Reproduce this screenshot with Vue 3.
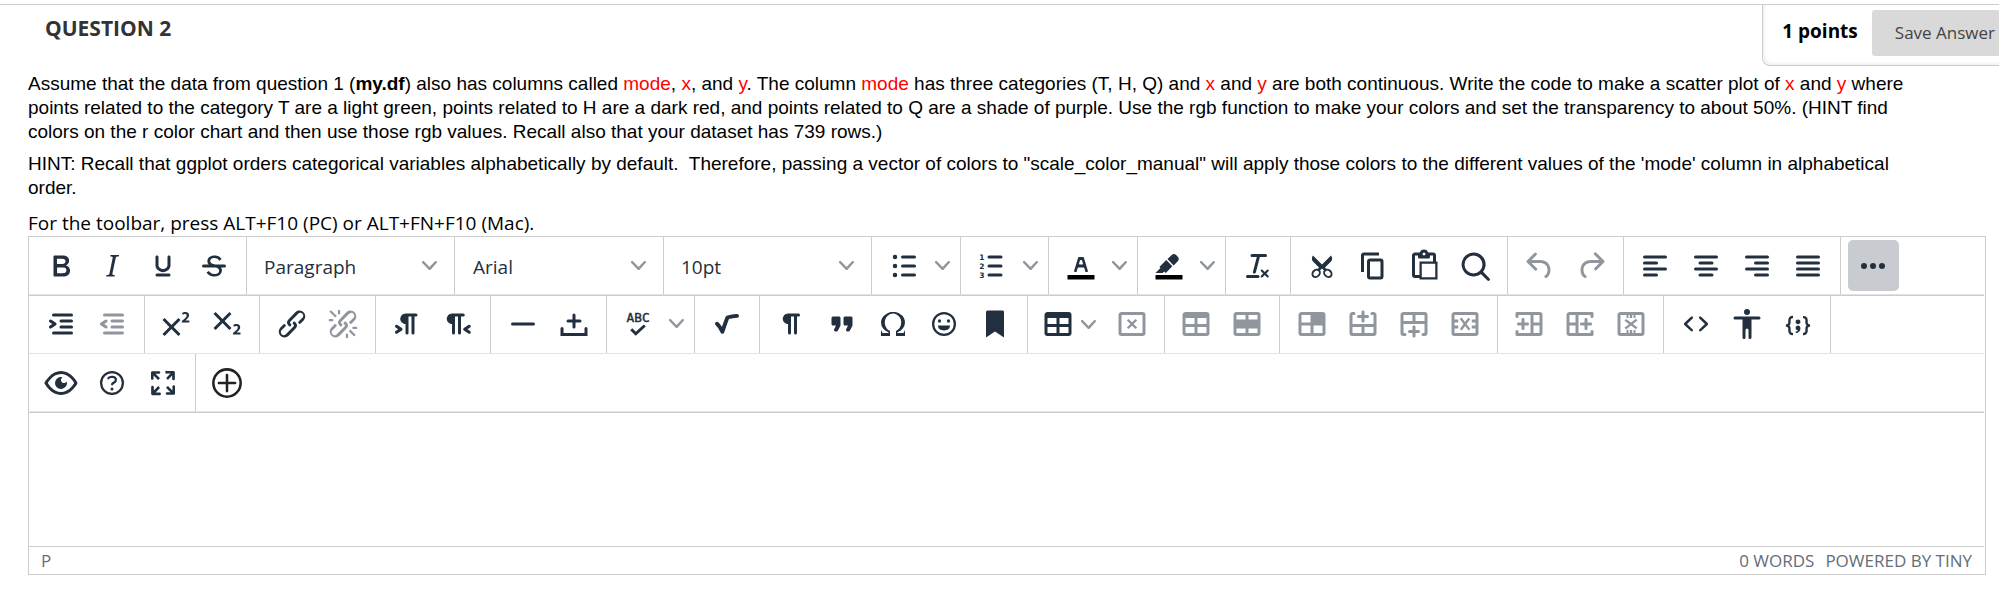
<script setup>
import { ref } from 'vue'

const svg = {
  bold: '<path d="M7.8 19c-.3 0-.5 0-.6-.2l-.2-.5V5.7c0-.2 0-.4.2-.5l.6-.2h5c1.5 0 2.7.3 3.5 1 .7.6 1.1 1.4 1.1 2.5a3 3 0 01-.6 1.9c-.4.6-1 1-1.6 1.2.4.1.9.3 1.3.6s.8.7 1 1.2c.4.4.5 1 .5 1.6 0 1.3-.4 2.3-1.3 3-.8.7-2.1 1-3.8 1H7.8zm5-8.3c.6 0 1.2-.1 1.6-.5.4-.3.6-.7.6-1.3 0-1.1-.8-1.7-2.3-1.7H9.3v3.5h3.4zm.5 6c.7 0 1.3-.1 1.7-.4.4-.4.6-.9.6-1.5s-.2-1-.7-1.4c-.4-.3-1-.4-2-.4H9.4v3.8h4z"/>',
  italic: '<path d="M16.7 4.7l-.1.9h-.3c-.6 0-1 0-1.4.3-.3.3-.4.6-.5 1.1l-2.1 9.8v.6c0 .5.4.8 1.4.8h.2l-.2.8H8l.2-.8h.2c1.1 0 1.8-.5 2-1.5l2-9.8.1-.5c0-.6-.4-.8-1.4-.8h-.3l.2-.9h5.8z"/>',
  underline: '<path d="M16 5c.6 0 1 .4 1 1v5.5a4 4 0 01-.4 1.8l-1 1.4a5.3 5.3 0 01-5.5 1 5 5 0 01-1.6-1c-.5-.4-.8-.9-1.1-1.4a4 4 0 01-.4-1.8V6c0-.6.4-1 1-1s1 .4 1 1v5.5c0 .3 0 .6.2 1l.6.7a3.3 3.3 0 002.2.8 3.4 3.4 0 002.2-.8c.3-.2.4-.5.6-.8l.2-.9V6c0-.6.4-1 1-1zM8 17h8c.6 0 1 .4 1 1s-.4 1-1 1H8a1 1 0 010-2z"/>',
  strike: '<path d="M15.6 8.5c-.5-.7-1-1.1-1.3-1.3-.6-.4-1.3-.6-2-.6-2.7 0-2.8 1.7-2.8 2.1 0 1.6 1.8 2 3.2 2.3 4.4.9 4.6 2.8 4.6 3.9 0 1.4-.7 4.1-5 4.1A6.2 6.2 0 017 16.4l1.5-1.1c.4.6 1.6 2 3.7 2 1.6 0 2.5-.4 3-1.2.4-.8.3-2-.8-2.6-.7-.4-1.6-.7-2.9-1-1-.2-3.9-.8-3.9-3.6C7.6 6 10.3 5 12.4 5c2.9 0 4.2 1.6 4.7 2.4l-1.5 1.1zM5 11h14a1 1 0 010 2H5a1 1 0 010-2z"/>',
  bullets: '<path d="M11 5h8a1 1 0 010 2h-8a1 1 0 010-2zm0 6h8a1 1 0 010 2h-8a1 1 0 010-2zm0 6h8a1 1 0 010 2h-8a1 1 0 010-2z"/><circle cx="6" cy="6" r="1.5"/><circle cx="6" cy="12" r="1.5"/><circle cx="6" cy="18" r="1.5"/>',
  numbers: '<path d="M10 5h8a1 1 0 010 2h-8a1 1 0 010-2zm0 6h8a1 1 0 010 2h-8a1 1 0 010-2zm0 6h8a1 1 0 010 2h-8a1 1 0 010-2z"/><g font-family="DejaVu Sans, sans-serif" font-size="5" font-weight="bold"><text x="3.5" y="8">1</text><text x="3.5" y="14">2</text><text x="3.5" y="20">3</text></g>',
  forecolor: '<path d="M3 18h18v3H3z" fill="#000"/><path d="M8.7 16h-.8a.5.5 0 01-.5-.6l2.7-9c.1-.3.3-.4.5-.4h2.8c.2 0 .4.1.5.4l2.7 9a.5.5 0 01-.5.6h-.8a.5.5 0 01-.4-.4l-.7-2.2c0-.3-.3-.4-.5-.4h-3.4c-.2 0-.4.1-.5.4l-.7 2.2c0 .3-.2.4-.4.4zm2.6-7.6l-.6 2a.5.5 0 00.5.6h1.6a.5.5 0 00.5-.6l-.6-2c0-.3-.3-.4-.5-.4h-.4c-.2 0-.4.1-.5.4z"/>',
  backcolor: '<path d="M3 18h18v3H3z" fill="#000"/><path d="M7.7 16.7H3l3.3-3.3-.7-.8L10.2 8l4 4.1-4 4.2c-.2.2-.6.2-.8 0l-.6-.7-1.1 1.1zm5-7.5L11 7.4l3-2.9a2 2 0 012.6 0L18 6c.7.7.7 2 0 2.7l-2.9 2.9-1.8-1.8-.5-.6"/>',
  clear: '<path d="M13.2 6a1 1 0 010 .2l-2.6 10a1 1 0 01-1 .8h-.2a.8.8 0 01-.8-1l2.6-10H8a1 1 0 110-2h9a1 1 0 010 2h-3.8zM5 18h7a1 1 0 010 2H5a1 1 0 010-2zm13 1.5L16.5 18 15 19.5a.7.7 0 01-1-1l1.5-1.5-1.5-1.5a.7.7 0 011-1l1.5 1.5 1.5-1.5a.7.7 0 011 1L17.5 17l1.5 1.5a.7.7 0 01-1 1z"/>',
  cut: '<path d="M6 5l6 6 6-6c1 1.300 1 3 0 4l-4 4 1 1.200-1.200 1.200L12 13.600l-1.800 1.800L9 14.200 10 13 6 9c-1-1-1-2.700 0-4z"/><g fill="none" stroke="#222f3e" stroke-width="1.300"><ellipse cx="8.100" cy="16.900" rx="2.700" ry="2.200" transform="rotate(-45 8.100 16.900)"/><ellipse cx="15.900" cy="16.900" rx="2.700" ry="2.200" transform="rotate(45 15.900 16.900)"/></g>',
  copy: '<path d="M16 3H6a2 2 0 00-2 2v11h2V5h10V3zm1 4a2 2 0 012 2v10a2 2 0 01-2 2h-7a2 2 0 01-2-2V9c0-1.200.9-2 2-2h7zm0 12V9h-7v10h7z"/>',
  paste: '<path d="M18 9V5h-2v1c0 .6-.4 1-1 1H9a1 1 0 01-1-1V5H6v13h3V9h9zM9 20H6a2 2 0 01-2-2V5c0-1.1.9-2 2-2h3.2A3 3 0 0112 1a3 3 0 012.8 2H18a2 2 0 012 2v4h1v12H9v-1zm1.500-9.500v9h9v-9h-9zM12 3a1 1 0 00-1 1c0 .5.4 1 1 1s1-.5 1-1-.4-1-1-1z"/>',
  search: '<path d="M16 17.3a8 8 0 111.4-1.4l4.3 4.4a1 1 0 01-1.4 1.4l-4.4-4.3zm-5-.3a6 6 0 100-12 6 6 0 000 12z"/>',
  undo: '<path d="M6.4 8H12c3.7 0 6.2 2 6.8 5.1.6 2.7-.4 5.6-2.3 6.8a1 1 0 01-1-1.8c1.1-.6 1.8-2.7 1.4-4.6-.5-2.1-2.1-3.5-4.9-3.5H6.4l3.3 3.3a1 1 0 11-1.4 1.4l-5-5a1 1 0 010-1.4l5-5a1 1 0 011.4 1.4L6.4 8z"/>',
  redo: '<path d="M17.6 10H12c-2.8 0-4.4 1.4-4.9 3.5-.4 2 .3 4 1.4 4.6a1 1 0 11-1 1.8c-2-1.2-2.9-4.1-2.3-6.8.6-3 3-5.1 6.8-5.1h5.600l-3.300-3.300a1 1 0 111.4-1.4l5 5a1 1 0 010 1.4l-5 5a1 1 0 01-1.4-1.4l3.3-3.3z"/>',
  left: '<path d="M5 5h14a1 1 0 010 2H5a1 1 0 010-2zm0 4h8a1 1 0 010 2H5a1 1 0 010-2zm0 8h8a1 1 0 010 2H5a1 1 0 010-2zm0-4h14a1 1 0 010 2H5a1 1 0 010-2z"/>',
  center: '<path d="M5 5h14a1 1 0 010 2H5a1 1 0 010-2zm3 4h8a1 1 0 010 2H8a1 1 0 010-2zm0 8h8a1 1 0 010 2H8a1 1 0 010-2zm-3-4h14a1 1 0 010 2H5a1 1 0 010-2z"/>',
  right: '<path d="M5 5h14a1 1 0 010 2H5a1 1 0 010-2zm6 4h8a1 1 0 010 2h-8a1 1 0 010-2zm0 8h8a1 1 0 010 2h-8a1 1 0 010-2zm-6-4h14a1 1 0 010 2H5a1 1 0 010-2z"/>',
  justify: '<path d="M5 5h14a1 1 0 010 2H5a1 1 0 010-2zm0 4h14a1 1 0 010 2H5a1 1 0 010-2zm0 4h14a1 1 0 010 2H5a1 1 0 010-2zm0 4h14a1 1 0 010 2H5a1 1 0 010-2z"/>',
  more: '<circle cx="6" cy="12" r="2"/><circle cx="12" cy="12" r="2"/><circle cx="18" cy="12" r="2"/>',
  indent: '<path d="M7 5h12a1 1 0 010 2H7a1 1 0 010-2zm5 4h7a1 1 0 010 2h-7a1 1 0 010-2zm0 4h7a1 1 0 010 2h-7a1 1 0 010-2zm-5 4h12a1 1 0 010 2H7a1 1 0 010-2zm-2.600-3.800L6.200 12l-1.800-1.200a1 1 0 011.200-1.600l3 2a1 1 0 010 1.600l-3 2a1 1 0 11-1.200-1.600z"/>',
  outdent: '<path d="M7 5h12a1 1 0 010 2H7a1 1 0 010-2zm5 4h7a1 1 0 010 2h-7a1 1 0 010-2zm0 4h7a1 1 0 010 2h-7a1 1 0 010-2zm-5 4h12a1 1 0 010 2H7a1 1 0 010-2zm1.600-3.800a1 1 0 01-1.200 1.600l-3-2a1 1 0 010-1.600l3-2a1 1 0 011.200 1.600L6.800 12l1.800 1.200z"/>',
  sup: '<path d="M15 9.4L10.400 14l4.600 4.600-1.400 1.400L9 15.400 4.400 20 3 18.600 7.600 14 3 9.400 4.400 8 9 12.600 13.600 8 15 9.400zm5.900 1.600h-5v-1l1-.8 1.700-1.600c.3-.5.5-.9.5-1.300 0-.3 0-.5-.2-.7-.2-.2-.5-.3-.9-.3l-.8.2-.7.4-.4-1.200c.2-.2.5-.4 1-.5.3-.2.8-.2 1.200-.2.8 0 1.400.2 1.800.6.4.4.6 1 .6 1.600 0 .5-.2 1-.5 1.500l-1.300 1.400-.6.500h2.600V11z"/>',
  sub: '<path d="M10.400 10l4.600 4.600-1.400 1.400L9 11.400 4.400 16 3 14.600 7.600 10 3 5.400 4.400 4 9 8.600 13.600 4 15 5.400 10.400 10zM21 19h-5v-1l1-.8 1.700-1.600c.3-.5.5-.9.5-1.300 0-.3 0-.5-.2-.7-.2-.2-.5-.3-.9-.3l-.8.2-.7.4-.4-1.200c.2-.2.5-.4 1-.5.3-.2.8-.2 1.200-.2.8 0 1.400.2 1.800.6.4.4.6 1 .6 1.600 0 .5-.2 1-.5 1.500l-1.300 1.400-.6.500H21V19z"/>',
  link: '<path d="M6.2 12.3a1 1 0 011.4 1.4l-2.1 2a2 2 0 102.7 2.8l4.8-4.8a1 1 0 000-1.4 1 1 0 111.4-1.3 2.9 2.9 0 010 4L9.6 20a3.9 3.9 0 01-5.5-5.5l2-2zm11.600-.6a1 1 0 01-1.4-1.4l2-2a2 2 0 10-2.600-2.800L11 10.300a1 1 0 000 1.400A1 1 0 119.600 13a2.9 2.9 0 010-4L14.400 4a3.9 3.9 0 015.500 5.500l-2 2z"/>',
  unlink: '<path d="M6.2 12.3a1 1 0 011.4 1.4l-2 2a2 2 0 102.6 2.8l4.8-4.8a1 1 0 000-1.4 1 1 0 111.4-1.3 2.9 2.9 0 010 4L9.6 20a3.9 3.9 0 01-5.5-5.5l2-2zm11.600-.6a1 1 0 01-1.4-1.4l2.100-2a2 2 0 10-2.700-2.800L11 10.300a1 1 0 000 1.400A1 1 0 119.600 13a2.9 2.9 0 010-4L14.400 4a3.9 3.9 0 015.500 5.500l-2 2zM7.6 6.3a.8.8 0 01-1 1.1L3.3 4.2a.7.7 0 111-1l3.2 3.1zM5.1 8.6a.8.8 0 010 1.5H3a.8.8 0 010-1.5h2zm5-3.500a.8.8 0 01-1.500 0V3a.8.8 0 011.500 0v2zm6 11.800a.8.8 0 011-1l3.200 3.200a.8.8 0 01-1 1L16 17zm-2.200 2a.8.8 0 011.500 0V21a.8.8 0 01-1.500 0v-2zm5-3.500a.7.7 0 110-1.500H21a.8.8 0 010 1.500h-2z"/>',
  ltr: '<path d="M11 5h7a1 1 0 010 2h-1v11a1 1 0 01-2 0V7h-2v11a1 1 0 01-2 0v-6c-.5 0-1 0-1.4-.3A3.4 3.4 0 017.800 10a3.3 3.3 0 010-2.800 3.400 3.400 0 011.800-1.800L11 5zM4.400 16.700L6.200 15.500l-1.800-1.200a1 1 0 011.200-1.600l3 2a1 1 0 010 1.600l-3 2a1 1 0 11-1.200-1.600z"/>',
  rtl: '<path d="M8 5h7.500a1 1 0 010 2H14v11a1 1 0 01-2 0V7h-2v11a1 1 0 01-2 0v-6c-.5 0-1 0-1.400-.3A3.400 3.400 0 014.800 10a3.300 3.300 0 010-2.800 3.400 3.400 0 011.800-1.800L8 5zM20.100 16.700a1 1 0 11-1.200 1.600l-3-2a1 1 0 010-1.600l3-2a1 1 0 111.200 1.600l-1.800 1.200 1.800 1.200z"/>',
  rule: '<path d="M5 11h14a1 1 0 010 2H5a1 1 0 010-2z"/>',
  nbsp: '<path d="M11 11H8a1 1 0 110-2h3V6a1 1 0 012 0v3h3a1 1 0 010 2h-3v3a1 1 0 01-2 0v-3zm10 4v5H3v-5a1 1 0 012 0v3h14v-3a1 1 0 012 0z"/>',
  spell: '<text x="4.400" y="10.400" font-family="DejaVu Sans Mono, monospace" font-size="8.500" stroke="#222f3e" stroke-width=".3">ABC</text><path d="M7.500 15.500l3 3 6-5.500" fill="none" stroke="#222f3e" stroke-width="2"/>',
  math: '<path d="M5.300 11.800c1.700 1.400 2.600 3.200 3.600 5.400C10 14 11 11 12.300 7.700c2-.7 4.200-.9 6.400-1.100" fill="none" stroke="#222f3e" stroke-width="2.600" stroke-linecap="round" stroke-linejoin="round"/>',
  pilcrow: '<path d="M10 5h7a1 1 0 010 2h-1v11a1 1 0 01-2 0V7h-2v11a1 1 0 01-2 0v-6c-.5 0-1 0-1.400-.3A3.400 3.400 0 016.800 10a3.300 3.300 0 010-2.800 3.400 3.400 0 011.800-1.800L10 5z"/>',
  quote: '<path d="M7.500 17h.9c.4 0 .7-.2.9-.6L11 13V8c0-.6-.4-1-1-1H6a1 1 0 00-1 1v4c0 .6.4 1 1 1h2l-1.300 2.700a1 1 0 00.8 1.300zm8 0h.9c.4 0 .7-.2.9-.6L19 13V8c0-.6-.4-1-1-1h-4a1 1 0 00-1 1v4c0 .6.4 1 1 1h2l-1.300 2.700a1 1 0 00.8 1.300z"/>',
  omega: '<path d="M15 18h4l1-2v4h-6v-3.3l1.4-1a6 6 0 001.8-2.9 6.3 6.3 0 00-.1-4.1 5.8 5.8 0 00-3-3.2c-.6-.3-1.3-.5-2.1-.5a5.1 5.1 0 00-3.9 1.8 6.3 6.3 0 00-1.3 6 6.2 6.2 0 001.8 3l1.4.9V20H4v-4l1 2h4v-.5l-2-1L5.4 15A6.5 6.5 0 014 11c0-1 .2-1.9.6-2.7A7 7 0 017.800 5.100C9.100 4.300 10.500 4 12 4c1.500 0 2.900.3 4.200 1a7 7 0 013.200 3.300c.4.800.6 1.700.6 2.700a6.500 6.500 0 01-1.500 4L17 16.500l-2 1v.5z"/>',
  emoji: '<circle cx="12" cy="12" r="7.250" fill="none" stroke="#222f3e" stroke-width="1.500"/><circle cx="9" cy="10" r="1.100"/><circle cx="15" cy="10" r="1.100"/><path d="M8 13h8c0 2-1.500 3.300-4 3.300S8 15 8 13z"/>',
  bookmark: '<path d="M6 4v17l6-4 6 4V4c0-.6-.4-1-1-1H7a1 1 0 00-1 1z"/>',
  table: '<path d="M19 4a2 2 0 012 2v12a2 2 0 01-2 2H5a2 2 0 01-2-2V6c0-1.1.9-2 2-2h14zM5 14v4h6v-4H5zm14 0h-6v4h6v-4zm0-6h-6v4h6V8zM5 12h6V8H5v4z"/>',
  delTable: '<path d="M19 4a2 2 0 012 2v12a2 2 0 01-2 2H5a2 2 0 01-2-2V6c0-1.1.9-2 2-2h14zM5 6v12h14V6H5zm9.400 2.600l1 1-2.300 2.400 2.300 2.400-1 1-2.400-2.300-2.400 2.300-1-1 2.300-2.400-2.300-2.400 1-1 2.400 2.300z"/>',
  rowProps: '<path d="M19 4a2 2 0 012 2v12a2 2 0 01-2 2H5a2 2 0 01-2-2V6c0-1.1.9-2 2-2h14zM5 15v3h6v-3H5zm14 0h-6v3h6v-3zm0-9h-6v3h6V6zM5 9h6V6H5v3z"/>',
  cellProps: '<path d="M19 4a2 2 0 012 2v12a2 2 0 01-2 2H5a2 2 0 01-2-2V6c0-1.1.9-2 2-2h14zM5 13v5h6v-5H5zm14 0h-6v5h6v-5zM11 6H5v5h6V6z"/>',
  rowAbove: '<path d="M6 4a1 1 0 110 2H5v6h14V6h-1a1 1 0 010-2h1c1.1 0 2 .9 2 2v12a2 2 0 01-2 2H5a2 2 0 01-2-2V6c0-1.1.9-2 2-2h1zm5 10H5v4h6v-4zm8 0h-6v4h6v-4zM12 3c.5 0 1 .4 1 .9V6h2a1 1 0 010 2h-2v2a1 1 0 01-2 .1V8H9a1 1 0 010-2h2V4c0-.6.4-1 1-1z"/>',
  rowBelow: '<path d="M19 4a2 2 0 012 2v12a2 2 0 01-2 2h-1a1 1 0 010-2h1v-6H5v6h1a1 1 0 010 2H5a2 2 0 01-2-2V6c0-1.1.9-2 2-2h14zm-7 9c.5 0 1 .4 1 .9V16h2a1 1 0 010 2h-2v2a1 1 0 01-2 .1V18H9a1 1 0 010-2h2v-2c0-.6.4-1 1-1zM11 6H5v4h6V6zm8 0h-6v4h6V6z"/>',
  delRow: '<path d="M19 4a2 2 0 012 2v12a2 2 0 01-2 2H5a2 2 0 01-2-2V6c0-1.1.9-2 2-2h14zm0 2H5v3h2.500v2H5v2h2.500v2H5v3h14v-3h-2.500v-2H19v-2h-2.500V9H19V6zm-4.700 1.800l1.200 1L13 12l2.600 3.300-1.200 1-2.300-3-2.300 3-1.200-1L11 12 8.500 8.700l1.200-1 2.300 3 2.300-3z"/>',
  colBefore: '<path d="M19 4a2 2 0 012 2v12a2 2 0 01-2 2H4a1 1 0 01-1-1v-2a1 1 0 012 0v1h8V6H5v1a1 1 0 11-2 0V5c0-.6.4-1 1-1h15zm0 9h-4v5h4v-5zM8 8c.5 0 1 .4 1 .9V11h2a1 1 0 01.1 2H9v2a1 1 0 01-2 .1V13H5a1 1 0 01-.1-2H7V9c0-.6.4-1 1-1zm11-2h-4v5h4V6z"/>',
  colAfter: '<path d="M20 4c.6 0 1 .4 1 1v2a1 1 0 01-2 0V6h-8v12h8v-1a1 1 0 012 0v2c0 .5-.4 1-.9 1H5a2 2 0 01-2-2V6c0-1.1.9-2 2-2h15zM9 13H5v5h4v-5zm7-5c.5 0 1 .4 1 .9V11h2a1 1 0 01.1 2H17v2a1 1 0 01-2 .1V13h-2a1 1 0 01-.1-2H15V9c0-.6.4-1 1-1zM9 6H5v5h4V6z"/>',
  delCol: '<path d="M19 4a2 2 0 012 2v12a2 2 0 01-2 2H5a2 2 0 01-2-2V6c0-1.1.9-2 2-2h14zm-4 4h-1.300V6h-.9v2h-1.600V6h-.9v2H9V6H5v12h4v-2h1.300v2h.9v-2h1.600v2h.9v-2H15v2h4V6h-4v2zm.3.5l1 1.200-3 2.300 3 2.300-1 1.200L12 13l-3.300 2.600-1-1.200 3-2.300-3-2.300 1-1.200L12 11l3.300-2.500z"/>',
  code: '<path d="M9.800 15.700c.3.3.3.8 0 1-.3.4-.9.4-1.200 0l-4.400-4.100a.8.8 0 010-1.200l4.400-4.200c.3-.3.9-.3 1.200 0 .3.3.3.8 0 1.100L6 12l3.800 3.700zM14.200 15.700c-.3.3-.3.8 0 1 .4.4.9.4 1.200 0l4.400-4.100c.3-.3.3-.9 0-1.200l-4.400-4.200a.8.8 0 00-1.200 0c-.3.3-.3.8 0 1.100L18 12l-3.800 3.700z"/>',
  a11y: '<path d="M12 2a2 2 0 010 4 2 2 0 010-4zm8 7h-5v12a1 1 0 01-2 0v-5a1 1 0 00-2 0v5a1 1 0 01-2 0V9H4a1 1 0 110-2h16a1 1 0 010 2z"/>',
  sample: '<path d="M7.100 11a2.800 2.800 0 01-.8 2 2.800 2.800 0 01.8 2v1.700c0 .3.1.6.4.8.2.3.5.4.8.4.3 0 .4.2.4.4v.8c0 .2-.1.4-.4.4-.7 0-1.400-.3-2-.8-.5-.6-.8-1.300-.8-2V15c0-.3-.1-.6-.4-.8-.2-.3-.5-.4-.8-.4a.4.4 0 01-.4-.4v-.8c0-.2.2-.4.4-.4.3 0 .6-.1.8-.4.3-.2.4-.5.4-.8V9.300c0-.7.3-1.400.8-2 .6-.5 1.300-.8 2-.8.3 0 .4.2.4.4v.8c0 .2-.1.4-.4.4-.3 0-.6.1-.8.4-.3.2-.4.5-.4.8V11zm9.800 0V9.300c0-.3-.1-.6-.4-.8-.2-.3-.5-.4-.8-.4a.4.4 0 01-.4-.4V7c0-.2.1-.4.4-.4.7 0 1.400.3 2 .8.5.6.8 1.300.8 2V11c0 .3.1.6.4.8.2.3.5.4.8.4.2 0 .4.2.4.4v.8c0 .2-.2.4-.4.4-.3 0-.6.1-.8.4-.3.2-.4.5-.4.8v1.700c0 .7-.3 1.400-.8 2-.6.5-1.300.8-2 .8a.4.4 0 01-.4-.4v-.8c0-.2.1-.4.4-.4.3 0 .6-.1.8-.4.3-.2.4-.5.4-.8V15a2.800 2.800 0 01.8-2 2.800 2.800 0 01-.8-2zm-3.300-.4c0 .4-.1.8-.5 1.100-.3.3-.7.5-1.100.5-.4 0-.8-.2-1.100-.5-.4-.3-.5-.7-.5-1.100 0-.5.1-.9.5-1.200.3-.3.7-.4 1.100-.4.4 0 .8.1 1.100.4.4.3.5.7.5 1.200zM12 13c.4 0 .8.1 1.100.5.4.3.5.7.5 1.100 0 1-.1 1.600-.5 2a3 3 0 01-1.100 1c-.4.3-.8.4-1.100.4a.5.5 0 01-.5-.5V17a3 3 0 001-.2l.6-.6c-.6 0-1-.2-1.300-.5-.2-.3-.3-.7-.3-1 0-.5.1-1 .5-1.200.3-.4.7-.5 1.100-.5z"/>',
  preview: '<path d="M3.500 12.500c.5.8 1.100 1.600 1.800 2.300 2 2 4.200 3.200 6.700 3.200s4.700-1.200 6.700-3.200a16.200 16.200 0 002.100-2.800 15.700 15.700 0 00-2.100-2.800c-2-2-4.200-3.200-6.700-3.200a9.300 9.300 0 00-6.700 3.200A16.200 16.200 0 003.200 12c0 .2.2.3.3.5zm-2.400-1l.7-1.200L4 7.800C6.200 5.400 8.900 4 12 4c3 0 5.800 1.400 8.100 3.800a18.200 18.200 0 012.800 3.700v1l-.7 1.200-2.100 2.500c-2.300 2.400-5 3.800-8.100 3.800-3 0-5.800-1.400-8.100-3.800a18.200 18.200 0 01-2.800-3.700 1 1 0 010-1zm12-3.300a2 2 0 102.700 2.600 4 4 0 11-2.600-2.600z"/>',
  help: '<circle cx="12" cy="12" r="7.250" fill="none" stroke="#222f3e" stroke-width="1.500"/><path d="M9.600 9.700a.7.7 0 01-.7-.8c0-1.100 1.500-1.800 3.200-1.800 1.800 0 3.200.8 3.200 2.400 0 1.400-.4 2.100-1.500 2.800-.2 0-.3.1-.3.2a2 2 0 00-.8.8.8.8 0 01-1.400-.6c.3-.7.8-1 1.300-1.500l.4-.2c.7-.4.8-.6.8-1.500 0-.5-.6-.9-1.700-.9-.5 0-1 .1-1.400.3-.2 0-.3.1-.3.200v-.2c0 .4-.4.8-.8.8z"/><circle cx="12" cy="16" r="1"/>',
  fullscreen: '<path d="M15.300 10l-1.200-1.300 2.900-3h-2.300a.9.9 0 110-1.700H19c.5 0 .9.4.9.9v4.400a.9.9 0 11-1.800 0V7l-2.900 3zm0 4l3 3v-2.300a.9.9 0 111.700 0V19c0 .5-.4.9-.9.9h-4.400a.9.9 0 110-1.800H17l-3-2.900 1.300-1.200zM10 15.400l-2.900 3h2.300a.9.9 0 110 1.700H5a.9.9 0 01-.9-.9v-4.400a.9.9 0 111.800 0V17l2.900-3 1.200 1.300zM8.700 10l-3-3v2.300a.9.9 0 01-1.700 0V5c0-.5.4-.9.9-.9h4.400a.9.9 0 010 1.800H7l3 2.900-1.300 1.200z"/>',
  add: '<g fill="none" stroke="#222" stroke-width="1.700" stroke-linecap="round"><circle cx="12" cy="12" r="9.100"/><path d="M12 6.600v10.800M6.600 12h10.800"/></g>'
}

const b = (icon, label, extra = {}) => ({ type: 'button', icon, label, ...extra })
const off = { disabled: true }
const split = (icon, label) => ({ type: 'split', icon, label })
const pick = (label, value, options) => ({ type: 'select', label, value, options })

const rows = [
  [
    [b('bold', 'Bold'), b('italic', 'Italic'), b('underline', 'Underline'), b('strike', 'Strikethrough')],
    [pick('Blocks', 'Paragraph', ['Paragraph', 'Heading', 'Preformatted'])],
    [pick('Fonts', 'Arial', ['Arial', 'Georgia', 'Verdana'])],
    [pick('Font sizes', '10pt', ['8pt', '10pt', '12pt', '14pt'])],
    [split('bullets', 'Bullet list')],
    [split('numbers', 'Numbered list')],
    [split('forecolor', 'Text color')],
    [split('backcolor', 'Background color')],
    [b('clear', 'Clear formatting')],
    [b('cut', 'Cut'), b('copy', 'Copy'), b('paste', 'Paste'), b('search', 'Find and replace')],
    [b('undo', 'Undo', off), b('redo', 'Redo', off)],
    [b('left', 'Align left'), b('center', 'Align center'), b('right', 'Align right'), b('justify', 'Justify')],
    [b('more', 'More', { active: true })]
  ],
  [
    [b('indent', 'Increase indent'), b('outdent', 'Decrease indent', off)],
    [b('sup', 'Superscript'), b('sub', 'Subscript')],
    [b('link', 'Insert link'), b('unlink', 'Remove link', off)],
    [b('ltr', 'Left to right'), b('rtl', 'Right to left')],
    [b('rule', 'Horizontal line'), b('nbsp', 'Nonbreaking space')],
    [split('spell', 'Spellcheck')],
    [b('math', 'Math editor')],
    [b('pilcrow', 'Show invisible characters'), b('quote', 'Blockquote'), b('omega', 'Special character'), b('emoji', 'Emoticons'), b('bookmark', 'Anchor')],
    [b('table', 'Table', { menu: true }), b('delTable', 'Delete table', off)],
    [b('table', 'Table header', off), b('rowProps', 'Row properties', off)],
    [b('cellProps', 'Cell properties', off), b('rowAbove', 'Insert row before', off), b('rowBelow', 'Insert row after', off), b('delRow', 'Delete row', off)],
    [b('colBefore', 'Insert column before', off), b('colAfter', 'Insert column after', off), b('delCol', 'Delete column', off)],
    [b('code', 'Source code'), b('a11y', 'Check accessibility'), b('sample', 'Code sample')]
  ],
  [
    [b('preview', 'Preview'), b('help', 'Help'), b('fullscreen', 'Fullscreen')],
    [b('add', 'Add content')]
  ]
]

const chevron = 'M8.700 2.200c.3-.3.8-.3 1 0 .4.4.4.9 0 1.200L5.700 7.800c-.3.3-.9.3-1.200 0L.2 3.400a.8.8 0 010-1.200c.3-.3.8-.3 1.100 0L5 6l3.700-3.800z'
const answer = ref('')
</script>

<template>
  <main class="page">
    <header class="head">
      <h3 class="title">QUESTION 2</h3>
      <div class="points">
        <strong>1 points</strong>
        <button type="button" class="save">Save Answer</button>
      </div>
    </header>

    <section class="body">
      <p>Assume that the data from question 1 (<b>my.df</b>) also has columns called <em>mode</em>, <em>x</em>, and <em>y</em>. The column <em>mode</em> has three categories (T, H, Q) and <em>x</em> and <em>y</em> are both continuous. Write the code to make a scatter plot of <em>x</em> and <em>y</em> where points related to the category T are a light green, points related to H are a dark red, and points related to Q are a shade of purple. Use the rgb function to make your colors and set the transparency to about 50%. (HINT find colors on the r color chart and then use those rgb values. Recall also that your dataset has 739 rows.)</p>
      <p>HINT: Recall that ggplot orders categorical variables alphabetically by default.&nbsp; Therefore, passing a vector of colors to "scale_color_manual" will apply those colors to the different values of the 'mode' column in alphabetical order.</p>
      <label class="hint" for="answer">For the toolbar, press ALT+F10 (PC) or ALT+FN+F10 (Mac).</label>

      <div class="editor">
        <div class="toolbar" role="toolbar" aria-label="Formatting">
          <div v-for="(row, r) in rows" :key="r" class="row">
            <div v-for="(group, g) in row" :key="g" class="group">
              <template v-for="item in group" :key="item.label">
                <span v-if="item.type === 'select'" class="pick">
                  <select :aria-label="item.label">
                    <option v-for="o in item.options" :key="o" :selected="o === item.value">{{ o }}</option>
                  </select>
                  <svg class="chev" viewBox="0 0 10 10"><path :d="chevron" /></svg>
                </span>
                <span v-else-if="item.type === 'split'" class="split">
                  <button type="button" class="tool" :aria-label="item.label">
                    <svg class="icon" viewBox="0 0 24 24" v-html="svg[item.icon]"></svg>
                  </button>
                  <button type="button" class="drop" :aria-label="item.label + ' options'">
                    <svg class="chev" viewBox="0 0 10 10"><path :d="chevron" /></svg>
                  </button>
                </span>
                <button
                  v-else
                  type="button"
                  class="tool"
                  :class="{ active: item.active, menu: item.menu }"
                  :disabled="item.disabled"
                  :aria-label="item.label"
                >
                  <svg class="icon" viewBox="0 0 24 24" v-html="svg[item.icon]"></svg>
                  <svg v-if="item.menu" class="chev" viewBox="0 0 10 10"><path :d="chevron" /></svg>
                </button>
              </template>
            </div>
          </div>
        </div>
        <textarea id="answer" v-model="answer" class="area"></textarea>
        <footer class="status">
          <span class="path">P</span>
          <button type="button" class="words">0 WORDS</button>
          <a href="#">POWERED BY TINY</a>
        </footer>
      </div>
    </section>
  </main>
</template>

<style>
body {
  background: #fff;
}
</style>

<style scoped>
.page {
  padding-top: 4px;
  overflow: hidden;
  font-family: "Open Sans", "Noto Sans", sans-serif;
  color: #000;
}
button,
select,
textarea {
  margin: 0;
  padding: 0;
  border: 0;
  background: transparent;
  font: inherit;
  color: inherit;
}
.head {
  display: flex;
  justify-content: space-between;
  align-items: flex-start;
  border-top: 1px solid #ccc;
  height: 61px;
}
.title {
  margin: 0;
  padding: 9px 0 0 45px;
  font-size: 21px;
  line-height: 28px;
  color: #333;
}
.points {
  display: flex;
  align-items: flex-start;
  gap: 14px;
  box-sizing: border-box;
  height: 61px;
  margin-right: -19px;
  padding: 5px 0 0 19px;
  border-left: 1px solid #ccc;
  border-bottom: 1px solid #ccc;
  border-bottom-left-radius: 8px;
  box-shadow: inset 2px -2px 3px #f2f2f2;
}
.points strong {
  font-size: 19px;
  line-height: 42px;
}
.save {
  height: 46px;
  padding: 0 23px 2px;
  border-radius: 3px;
  background: #d9d9d9;
  color: #444;
  font-size: 17px;
}
.body {
  padding: 6px 13px 0 28px;
}
.body p {
  margin: 0 0 8px;
  padding-right: 50px;
  font-family: "Liberation Sans", Arial, sans-serif;
  font-size: 19px;
  line-height: 24px;
}
em {
  font-style: normal;
  color: #f00;
}
.hint {
  display: block;
  padding-top: 2px;
  font-size: 19px;
  line-height: 26px;
}
.editor {
  border: 1px solid #ccc;
}
.toolbar,
.status {
  margin-right: 1px;
}
.toolbar {
  border-bottom: 1px solid #ccc;
}
.row {
  display: flex;
  height: 57px;
  border-bottom: 1px solid #e3e3e3;
}
.row:first-child {
  box-shadow: 0 1px 0 #ccc;
  margin-bottom: 1px;
}
.group {
  display: flex;
  align-items: center;
  padding: 0 6px;
  border-right: 1px solid #ccc;
}
.row:nth-child(2) .group {
  padding-bottom: 2px;
}
.group:nth-child(odd) {
  padding-left: 7px;
}
.row:first-child .group:last-child,
.row:last-child .group:last-child {
  border-right: 0;
}
.tool {
  display: flex;
  align-items: center;
  box-sizing: border-box;
  width: 51px;
  height: 51px;
  padding: 1px 7px 0;
  border-radius: 5px;
}
.tool.menu {
  justify-content: space-between;
  width: 72px;
  padding: 1px 11px 0 5px;
}
.tool.active {
  background: #c8cbcf;
}
.icon {
  flex: none;
  width: 36px;
  height: 36px;
  fill: #222f3e;
}
.tool:disabled .icon {
  opacity: 0.5;
}
.chev {
  flex: none;
  width: 15px;
  height: 15px;
  fill: #222f3e;
  opacity: 0.5;
}
.split {
  display: flex;
}
.drop {
  display: flex;
  align-items: center;
  justify-content: center;
  width: 24px;
  height: 51px;
}
.pick {
  display: flex;
  align-items: center;
  position: relative;
}
.pick select {
  appearance: none;
  width: 195px;
  height: 51px;
  padding: 3px 32px 0 11px;
  font-size: 19px;
  color: #222f3e;
}
.pick .chev {
  position: absolute;
  right: 11px;
  pointer-events: none;
}
.area {
  display: block;
  box-sizing: border-box;
  width: 100%;
  height: 133px;
  padding: 12px;
  resize: none;
  outline: 0;
}
.status {
  display: flex;
  align-items: center;
  gap: 11px;
  height: 27px;
  padding: 0 12px;
  border-top: 1px solid #ccc;
  font-size: 17px;
  line-height: 27px;
  color: #646d78;
}
.path {
  flex: 1;
}
.status a {
  color: inherit;
  text-decoration: none;
}
</style>
